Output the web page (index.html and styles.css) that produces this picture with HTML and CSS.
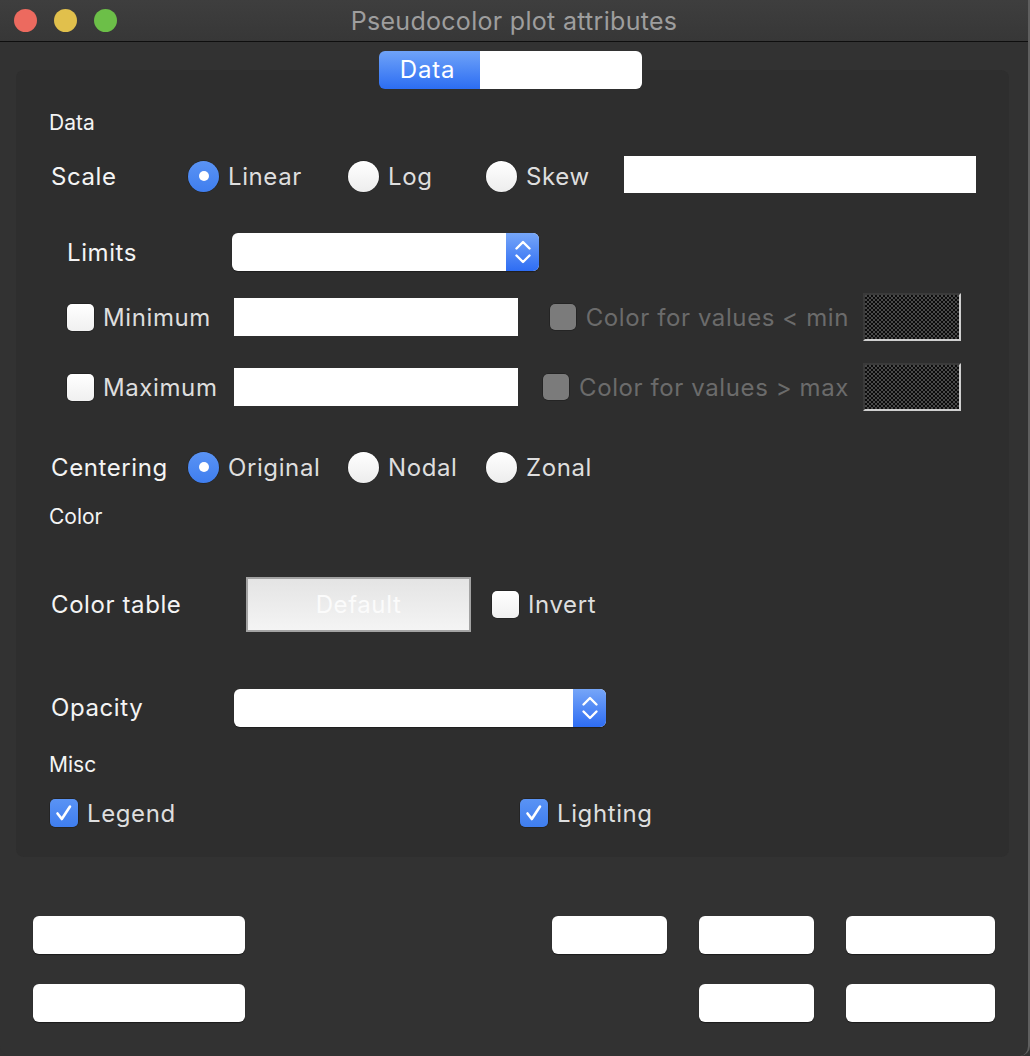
FILE: index.html
```html
<!DOCTYPE html>
<html>
<head>
<meta charset="utf-8">
<link rel="stylesheet" href="styles.css">
</head>
<body>
<div class="window">
  <div class="titlebar">
    <div class="lights"><span class="light red"></span><span class="light yellow"></span><span class="light green"></span></div>
    <div class="title">Pseudocolor plot attributes</div>
    <div></div>
  </div>
  <div class="content">
    <div class="tabs"><div class="tab active">Data</div><div class="tab blank"></div></div>
    <div class="panel">
      <div class="section sec-data">Data</div>

      <div class="radio-row row-scale">
        <span class="label">Scale</span>
        <span class="radio"><span class="rb on"></span><span class="rtext">Linear</span></span>
        <span class="radio"><span class="rb"></span><span class="rtext">Log</span></span>
        <span class="radio"><span class="rb"></span><span class="rtext">Skew</span></span>
        <span class="field scale-field"></span>
      </div>

      <div class="row row-limits">
        <span class="label limits-label">Limits</span>
        <span class="combo limits-combo"><span class="combo-btn"><svg width="18" height="28" viewBox="0 0 18 28"><path d="M2.5 10.5 L9 4 L15.5 10.5 M2.5 17.5 L9 24 L15.5 17.5" fill="none" stroke="#fff" stroke-width="2.4" stroke-linecap="round" stroke-linejoin="round"/></svg></span></span>
      </div>

      <div class="mm-row row-min">
        <span class="check-item"><span class="cb"></span><span class="ctext">Minimum</span></span>
        <span class="field mm-field"></span>
        <span class="color-check"><span class="cb disabled"></span><span class="dtext">Color for values &lt; min</span></span>
        <span class="swatch"></span>
      </div>

      <div class="mm-row row-max">
        <span class="check-item"><span class="cb"></span><span class="ctext">Maximum</span></span>
        <span class="field mm-field"></span>
        <span class="color-check"><span class="cb disabled"></span><span class="dtext">Color for values &gt; max</span></span>
        <span class="swatch"></span>
      </div>

      <div class="radio-row row-centering">
        <span class="label">Centering</span>
        <span class="radio"><span class="rb on"></span><span class="rtext">Original</span></span>
        <span class="radio"><span class="rb"></span><span class="rtext">Nodal</span></span>
        <span class="radio"><span class="rb"></span><span class="rtext">Zonal</span></span>
      </div>

      <div class="section sec-color">Color</div>

      <div class="row row-table">
        <span class="label table-label">Color table</span>
        <span class="default-btn">Default</span>
        <span class="check-item invert"><span class="cb"></span><span class="ctext">Invert</span></span>
      </div>

      <div class="row row-opacity">
        <span class="label opacity-label">Opacity</span>
        <span class="combo opacity-combo"><span class="combo-btn"><svg width="18" height="28" viewBox="0 0 18 28"><path d="M2.5 10.5 L9 4 L15.5 10.5 M2.5 17.5 L9 24 L15.5 17.5" fill="none" stroke="#fff" stroke-width="2.4" stroke-linecap="round" stroke-linejoin="round"/></svg></span></span>
      </div>

      <div class="section sec-misc">Misc</div>

      <div class="misc-row">
        <span class="check-item"><span class="cb on"><svg width="28" height="28" viewBox="0 0 28 28"><path d="M7.5 14.5 L11.8 20 L20 7.5" fill="none" stroke="#fff" stroke-width="2.6" stroke-linecap="round" stroke-linejoin="round"/></svg></span><span class="ctext">Legend</span></span>
        <span class="check-item"><span class="cb on"><svg width="28" height="28" viewBox="0 0 28 28"><path d="M7.5 14.5 L11.8 20 L20 7.5" fill="none" stroke="#fff" stroke-width="2.6" stroke-linecap="round" stroke-linejoin="round"/></svg></span><span class="ctext">Lighting</span></span>
      </div>
    </div>

    <div class="buttons">
      <div class="btn-row row1">
        <span class="btn wide"></span>
        <span class="btn-group"><span class="btn small"></span><span class="btn small"></span><span class="btn mid"></span></span>
      </div>
      <div class="btn-row row2">
        <span class="btn wide"></span>
        <span class="btn-group"><span class="btn small"></span><span class="btn mid"></span></span>
      </div>
    </div>
  </div>
</div>
</body>
</html>
```

FILE: styles.css
```css
html, body {
  margin: 0;
  padding: 0;
  background: #323232;
}
body {
  font-family: Inter, "Liberation Sans", sans-serif;
  color: #ececec;
}
.window {
  width: 1030px;
  height: 1056px;
  box-sizing: border-box;
  background: #323232;
  border-right: 2px solid #5f5f5f;
  border-radius: 0 0 10px 10px;
  display: flex;
  flex-direction: column;
  overflow: hidden;
}
.titlebar {
  height: 42px;
  box-sizing: border-box;
  border-bottom: 1px solid #0e0e0e;
  background: linear-gradient(#3e3e3e, #373737);
  display: grid;
  grid-template-columns: 1fr auto 1fr;
  align-items: center;
}
.lights {
  display: flex;
  gap: 17px;
  padding-left: 14px;
}
.light {
  width: 23px;
  height: 23px;
  border-radius: 50%;
}
.red { background: #ec6a5f; }
.yellow { background: #e1c04c; }
.green { background: #6cbf48; }
.title {
  color: #9e9e9e;
  font-size: 25px;
  letter-spacing: 0.3px;
}
.content {
  flex: 1;
  padding: 9px 19px 0 16px;
  display: flex;
  flex-direction: column;
}
.tabs {
  display: flex;
  justify-content: center;
  padding-right: 4px;
  position: relative;
  z-index: 1;
}
.tab {
  height: 38px;
  box-sizing: border-box;
}
.tab.active {
  width: 101px;
  border-radius: 6px 0 0 6px;
  background: linear-gradient(#6fa3f8, #2c6df3);
  color: #fff;
  font-size: 24px;
  letter-spacing: 0.8px;
  line-height: 38px;
  text-align: center;
  padding-right: 4px;
}
.tab.blank {
  width: 162px;
  background: #fff;
  border-radius: 0 6px 6px 0;
}
.panel {
  margin-top: -19px;
  height: 787px;
  box-sizing: border-box;
  background: #2e2e2e;
  border-radius: 8px;
  padding: 38px 0 0 33px;
  display: flex;
  flex-direction: column;
}
.section {
  height: 30px;
  line-height: 30px;
  font-size: 21px;
  color: #f4f4f4;
}
.sec-color { margin-top: 15px; }
.sec-misc { margin-top: 23px; }
.label {
  font-size: 24px;
  letter-spacing: 0.6px;
  color: #f4f4f4;
}
.radio-row {
  display: grid;
  grid-template-columns: 139px 160px 138px 138px 352px;
  align-items: center;
  height: 40px;
}
.radio-row .label { padding-left: 2px; }
.row-scale { margin-top: 18px; }
.row-centering { margin-top: 36px; }
.radio {
  display: flex;
  align-items: center;
  gap: 9px;
}
.rb {
  width: 31px;
  height: 31px;
  border-radius: 50%;
  box-sizing: border-box;
  background: linear-gradient(#ffffff, #ededed);
  box-shadow: 0 0 0 0.5px rgba(0, 0, 0, 0.4);
  display: flex;
  align-items: center;
  justify-content: center;
}
.rb.on {
  background: linear-gradient(#5a93f4, #3f7eef);
}
.rb.on::after {
  content: "";
  width: 10px;
  height: 10px;
  border-radius: 50%;
  background: #fff;
}
.rtext, .ctext {
  font-size: 24px;
  letter-spacing: 0.6px;
  color: #dedede;
}
.field {
  background: #fff;
  display: block;
}
.scale-field {
  height: 37px;
  align-self: start;
}
.row {
  display: flex;
  align-items: center;
}
.row-limits {
  margin-top: 37px;
  height: 38px;
}
.limits-label {
  width: 165px;
  padding-left: 18px;
}
.combo {
  height: 38px;
  background: #fff;
  border-radius: 6px;
  display: flex;
  justify-content: flex-end;
  overflow: hidden;
  box-shadow: 0 1px 1px rgba(0, 0, 0, 0.35);
}
.limits-combo { width: 307px; }
.combo-btn {
  width: 33px;
  background: linear-gradient(#76a6f8, #2e6df3);
  display: flex;
  align-items: center;
  justify-content: center;
}
.mm-row {
  display: grid;
  grid-template-columns: 167px 284px 331px 98px;
  align-items: center;
  height: 48px;
  padding-left: 18px;
}
.row-min { margin-top: 22px; }
.row-max { margin-top: 22px; }
.mm-row .swatch { margin-left: 14px; }
.mm-field { height: 38px; }
.check-item {
  display: flex;
  align-items: center;
  gap: 9px;
}
.cb {
  width: 27px;
  height: 27px;
  border-radius: 5px;
  background: linear-gradient(#ffffff, #f0f0f0);
  box-shadow: 0 0 0 0.5px rgba(0, 0, 0, 0.4);
  display: flex;
  align-items: center;
  justify-content: center;
  flex: none;
}
.cb.on {
  width: 28px;
  height: 28px;
  background: linear-gradient(#5a93f4, #3f7eef);
}
.cb.disabled {
  width: 26px;
  height: 26px;
  background: #7b7b7b;
}
.color-check {
  display: flex;
  align-items: center;
  justify-content: flex-end;
  gap: 10px;
}
.dtext {
  font-size: 24px;
  letter-spacing: 0.6px;
  color: #6b6b6b;
}
.swatch {
  width: 98px;
  height: 48px;
  box-sizing: border-box;
  border-top: 2px solid #3a3a3a;
  border-left: 2px solid #3a3a3a;
  border-right: 2px solid #cfcfcf;
  border-bottom: 2px solid #cfcfcf;
  background: repeating-conic-gradient(#0c0c0c 0 25%, #4a4a4a 0 50%) 0 0 / 4px 4px;
}
.row-table {
  margin-top: 45px;
  height: 55px;
}
.table-label {
  width: 195px;
  padding-left: 2px;
}
.default-btn {
  width: 225px;
  height: 55px;
  box-sizing: border-box;
  border: 2px solid #a3a3a3;
  background: linear-gradient(#e4e4e4, #f4f4f4);
  color: #fbfbfb;
  font-size: 24px;
  letter-spacing: 0.6px;
  display: flex;
  align-items: center;
  justify-content: center;
}
.invert { margin-left: 21px; }
.row-opacity {
  margin-top: 56px;
  height: 39px;
}
.opacity-label {
  width: 183px;
  padding-left: 2px;
}
.opacity-combo { width: 372px; }
.misc-row {
  display: grid;
  grid-template-columns: 470px auto;
  align-items: center;
  height: 40px;
  margin-top: 13px;
  padding-left: 1px;
}
.buttons {
  padding: 59px 14px 0 17px;
  display: flex;
  flex-direction: column;
  gap: 30px;
}
.btn-row {
  display: flex;
  justify-content: space-between;
}
.btn-group {
  display: flex;
  gap: 32px;
}
.btn {
  height: 38px;
  background: #fff;
  border-radius: 6px;
  box-shadow: 0 1px 1px rgba(0, 0, 0, 0.45);
  display: block;
}
.btn.wide { width: 212px; }
.btn.small { width: 115px; }
.btn.mid { width: 149px; }
```
